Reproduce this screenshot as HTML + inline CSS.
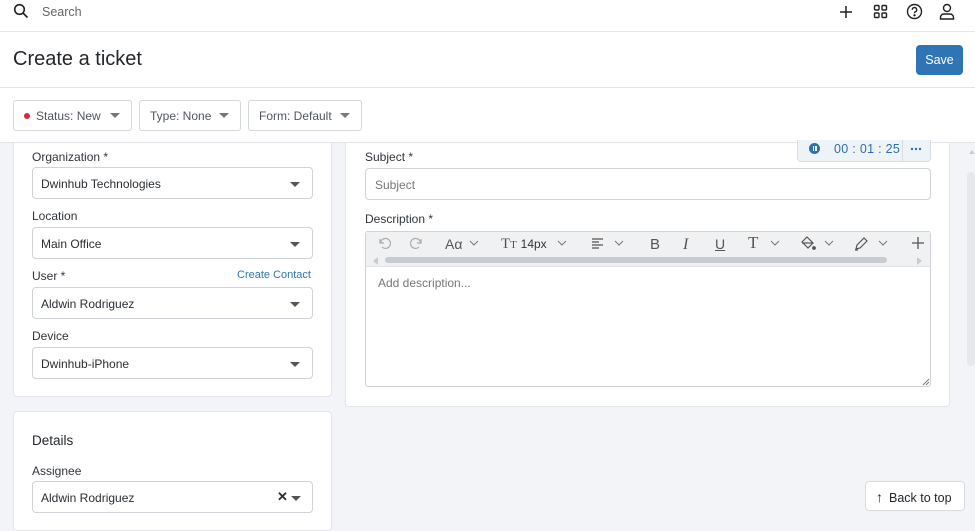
<!DOCTYPE html>
<html><head><meta charset="utf-8"><style>
*{box-sizing:border-box;margin:0;padding:0}
body{width:975px;height:512px;overflow:hidden;background:#f2f4f7;font-family:"Liberation Sans",sans-serif;color:#2b2f33;position:relative}
.a{position:absolute}
.top{left:0;top:0;width:975px;height:32px;background:#fff;border-bottom:1px solid #e6e8eb;z-index:5}
.hdr{left:0;top:32px;width:975px;height:56px;background:#fff;border-bottom:1px solid #e3e5e8;z-index:5}
.bar{left:0;top:88px;width:975px;height:55px;background:#fff;border-bottom:1px solid #e3e5e8;z-index:5}
.z{z-index:6}
.pill{top:100px;height:31px;border:1px solid #d5d8dc;border-radius:3px;background:#fff;font-size:12px;color:#505660;padding:8px 0 0 10px}
.card{background:#fff;border:1px solid #e4e6e9;border-radius:4px}
.lbl{font-size:12px;color:#30353b}
.sel{height:32px;border:1px solid #cfd3d8;border-radius:4px;background:#fff;font-size:12px;color:#2b2f33;padding:9px 0 0 8px}
.tri{position:absolute;width:0;height:0;border-left:5px solid transparent;border-right:5px solid transparent;border-top:5px solid #555}
.ti{position:absolute;top:236px;font-size:14px;color:#555}
</style></head><body>
<div class="a top"></div>
<svg class="a z" style="left:13px;top:3px" width="16" height="16" viewBox="0 0 16 16" fill="none" stroke="#222" stroke-width="1.6"><circle cx="6.5" cy="6.5" r="4.8"/><path d="M10 10l4.5 4.5"/></svg>
<div class="a z" style="left:42px;top:5px;font-size:12.5px;color:#666">Search</div>
<svg class="a z" style="left:838px;top:4px" width="16" height="16" stroke="#222" stroke-width="1.5"><path d="M8 2v12M2 8h12"/></svg>
<svg class="a z" style="left:873px;top:4px" width="15" height="15" fill="none" stroke="#222" stroke-width="1.4"><rect x="1.5" y="1.5" width="4.5" height="4.5" rx="1"/><rect x="9" y="1.5" width="4.5" height="4.5" rx="1"/><rect x="1.5" y="9" width="4.5" height="4.5" rx="1"/><rect x="9" y="9" width="4.5" height="4.5" rx="1"/></svg>
<svg class="a z" style="left:906px;top:3px" width="17" height="17" fill="none" stroke="#222" stroke-width="1.4"><circle cx="8.5" cy="8.5" r="7"/><path d="M6.3 6.8a2.2 2.2 0 1 1 3 2c-.6.3-.8.7-.8 1.4"/><circle cx="8.5" cy="12.3" r=".5" fill="#222"/></svg>
<svg class="a z" style="left:939px;top:3px" width="16" height="17" fill="none" stroke="#222" stroke-width="1.4"><circle cx="8" cy="5" r="3.5"/><path d="M1.5 16v-1.5c0-2 1.5-3.5 3.5-3.5h6c2 0 3.5 1.5 3.5 3.5V16z"/></svg>
<div class="a hdr"></div>
<div class="a z" style="left:13px;top:48px;font-size:20px;color:#23272b">Create a ticket</div>
<div class="a z" style="left:916px;top:45px;width:47px;height:30px;background:#2f74b5;border-radius:4px;color:#fff;font-size:12.5px;text-align:center;padding-top:8px">Save</div>
<div class="a bar"></div>
<div class="a pill z" style="left:13px;width:119px"><span style="display:inline-block;width:6px;height:6px;border-radius:50%;background:#d62c3a;margin-right:6px;vertical-align:1px"></span>Status: New<span class="tri" style="left:96px;top:12px;border-top-color:#777"></span></div>
<div class="a pill z" style="left:139px;width:102px">Type: None<span class="tri" style="left:79px;top:12px;border-top-color:#777"></span></div>
<div class="a pill z" style="left:248px;width:114px">Form: Default<span class="tri" style="left:91px;top:12px;border-top-color:#777"></span></div>

<div class="a card" style="left:13px;top:136px;width:319px;height:261px"></div>
<div class="a lbl" style="left:32px;top:150px">Organization *</div>
<div class="a sel" style="left:32px;top:167px;width:281px">Dwinhub Technologies<span class="tri" style="left:257px;top:14px"></span></div>
<div class="a lbl" style="left:32px;top:209px">Location</div>
<div class="a sel" style="left:32px;top:227px;width:281px">Main Office<span class="tri" style="left:257px;top:14px"></span></div>
<div class="a lbl" style="left:32px;top:269px">User *</div>
<div class="a" style="left:237px;top:269px;font-size:11px;color:#2f74b5">Create Contact</div>
<div class="a sel" style="left:32px;top:287px;width:281px">Aldwin Rodriguez<span class="tri" style="left:257px;top:14px"></span></div>
<div class="a lbl" style="left:32px;top:329px">Device</div>
<div class="a sel" style="left:32px;top:347px;width:281px">Dwinhub-iPhone<span class="tri" style="left:257px;top:14px"></span></div>

<div class="a card" style="left:13px;top:411px;width:319px;height:120px"></div>
<div class="a" style="left:32px;top:433px;font-size:13.5px;color:#23272b">Details</div>
<div class="a lbl" style="left:32px;top:464px">Assignee</div>
<div class="a sel" style="left:32px;top:481px;width:281px">Aldwin Rodriguez<span style="position:absolute;left:244px;top:7px;font-size:13px;font-weight:bold">✕</span><span class="tri" style="left:258px;top:14px"></span></div>

<div class="a card" style="left:345px;top:136px;width:605px;height:271px"></div>
<div class="a z" style="left:797px;top:140px;width:134px;height:22px;background:#eef3f8;border:1px solid #d6dde5;border-top:none;border-radius:0 0 4px 4px"></div>
<div class="a z" style="left:902px;top:140px;width:1px;height:21px;background:#d6dde5"></div>
<div class="a z" style="left:809px;top:143px;width:11px;height:11px;border-radius:50%;background:#2f6fae"></div>
<div class="a z" style="left:812.5px;top:146px;width:1.5px;height:5px;background:#fff"></div><div class="a z" style="left:815px;top:146px;width:1.5px;height:5px;background:#fff"></div>
<div class="a z" style="left:834px;top:142px;font-size:12.5px;color:#2f6fae;letter-spacing:.3px">00 : 01 : 25</div>
<svg class="a z" style="left:910px;top:147px" width="12" height="4" fill="#2f6fae"><circle cx="2" cy="2" r="1.2"/><circle cx="6" cy="2" r="1.2"/><circle cx="10" cy="2" r="1.2"/></svg>
<div class="a lbl" style="left:365px;top:150px">Subject *</div>
<div class="a sel" style="left:365px;top:168px;width:566px;color:#777;padding-left:9px">Subject</div>
<div class="a lbl" style="left:365px;top:212px">Description *</div>
<div class="a" style="left:365px;top:231px;width:566px;height:156px;border:1px solid #cfd3d8;border-radius:3px;background:#fff"></div>
<div class="a" style="left:366px;top:232px;width:564px;height:35px;background:#f0f1f3;border-bottom:1px solid #e1e3e6"></div>
<div class="a" style="left:385px;top:257px;width:502px;height:6px;border-radius:3px;background:#c8ccd1"></div>
<div class="a" style="left:373px;top:257px;border-top:4px solid transparent;border-bottom:4px solid transparent;border-right:5px solid #c8ccd1;width:0;height:0"></div>
<div class="a" style="left:917px;top:257px;border-top:4px solid transparent;border-bottom:4px solid transparent;border-left:5px solid #c8ccd1;width:0;height:0"></div>
<svg class="a" style="left:377px;top:236px" width="14" height="14" fill="none" stroke="#aaa" stroke-width="1.2"><path d="M3 3v4h4"/><path d="M3.5 7A5 5 0 1 1 5 11"/></svg>
<svg class="a" style="left:410px;top:236px" width="14" height="14" fill="none" stroke="#aaa" stroke-width="1.2"><path d="M11 3v4H7"/><path d="M10.5 7A5 5 0 1 0 9 11"/></svg>
<span class="ti" style="left:445px;font-size:14px">Aα</span>
<span class="ti" style="left:501px;font-family:'Liberation Serif',serif;font-size:15px">T<span style="font-size:11px">T</span> <span style="font-family:'Liberation Sans';font-size:12px;color:#333">14px</span></span>
<svg class="a" style="left:591px;top:237px" width="13" height="12" stroke="#555" stroke-width="1.2"><path d="M1 2h11M1 5h7M1 8h11M1 11h7"/></svg>
<span class="ti" style="left:650px;font-size:15px">B</span>
<span class="ti" style="left:683px;font-family:'Liberation Serif',serif;font-style:italic;font-size:16px">I</span>
<span class="ti" style="left:715px;text-decoration:underline">U</span>
<span class="ti" style="left:748px;font-family:'Liberation Serif',serif;font-size:17px;top:233px">T</span>
<svg class="a" style="left:800px;top:236px" width="16" height="15" fill="none" stroke="#555" stroke-width="1.2"><path d="M7 1l6 6-5 5-6-6z"/><path d="M2 7h11"/><circle cx="14" cy="12" r="1.3" fill="#555"/></svg>
<svg class="a" style="left:854px;top:236px" width="15" height="15" fill="none" stroke="#555" stroke-width="1.2"><path d="M2 13l1-4 7-7 3 3-7 7z"/><path d="M1 14h3"/></svg>
<svg class="a" style="left:912px;top:237px" width="12" height="12" stroke="#555" stroke-width="1.3"><path d="M6 0v12M0 6h12"/></svg>
<svg class="a" width="975" height="512" style="left:0;top:0" fill="none" stroke="#777" stroke-width="1"><path d="M470 241l4 4 4-4M558 241l4 4 4-4M615 241l4 4 4-4M771 241l4 4 4-4M825 241l4 4 4-4M879 241l4 4 4-4"/></svg>
<div class="a" style="left:378px;top:276px;font-size:12px;color:#777">Add description...</div>
<svg class="a" style="left:922px;top:378px" width="8" height="8" stroke="#777"><path d="M7 1L1 7M7 4L4 7"/></svg>

<div class="a" style="left:969px;top:150px;width:0;height:0;border-left:3px solid transparent;border-right:3px solid transparent;border-bottom:4px solid #ccc"></div>
<div class="a" style="left:967px;top:172px;width:8px;height:194px;background:#e6e8eb;border-radius:4px"></div>

<div class="a" style="left:865px;top:481px;width:100px;height:30px;background:#fff;border:1px solid #d8dbdf;border-radius:4px;font-size:12.5px;padding:7px 0 0 10px;color:#23272b"><span style="font-size:14px;margin-right:6px">↑</span>Back to top</div>
</body></html>
